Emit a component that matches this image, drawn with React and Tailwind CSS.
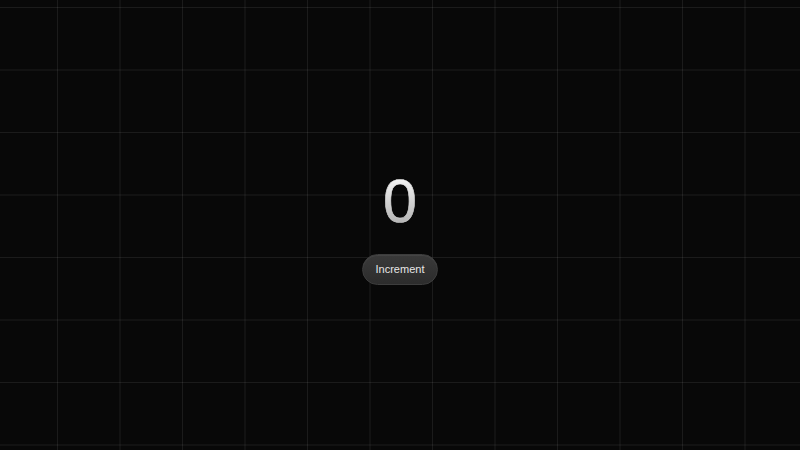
import { useState } from "react";

export default function App() {
  const [count, setCount] = useState(0);

  return (
    <div
      className="flex h-[450px] w-[800px] flex-col items-center justify-center bg-[#080808] font-['Liberation_Sans',Arial,sans-serif]"
      style={{
        backgroundImage:
          "linear-gradient(to right, rgba(255,255,255,0.08) 1px, transparent 1px), linear-gradient(to bottom, rgba(255,255,255,0.08) 1px, transparent 1px)",
        backgroundSize: "62.5px 62.5px",
        backgroundPosition: "57px 7px",
      }}
    >
      {/* Contador */}
      <p className="mt-[6px] bg-gradient-to-b from-white to-[#a8a8a8] bg-clip-text text-[61px] leading-none text-transparent [-webkit-text-stroke:0.6px_rgba(230,230,230,0.35)]">
        {count}
      </p>
      <button
        onClick={() => setCount((c) => c + 1)}
        className="mt-[22px] rounded-full border border-[#3d3d3d] bg-gradient-to-b from-[#3a3a3a] to-[#2c2c2c] px-[13px] py-[6px] text-[11px] text-[#e6e6e6] shadow-[0_1px_0_rgba(255,255,255,0.06)_inset]"
      >
        Increment
      </button>
    </div>
  );
}
